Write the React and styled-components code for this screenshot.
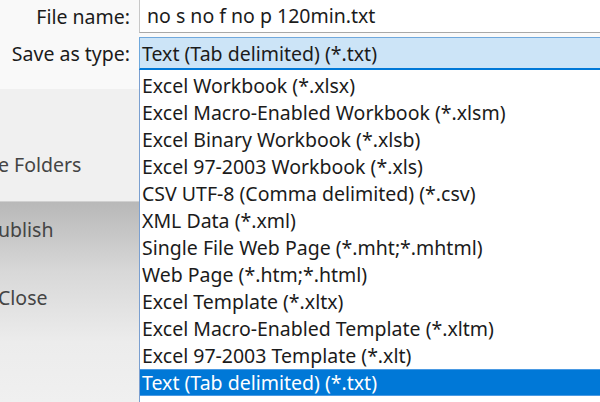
import React from 'react';
import styled, { createGlobalStyle } from 'styled-components';

const GlobalStyle = createGlobalStyle`
  html, body {
    margin: 0;
    padding: 0;
    width: 600px;
    height: 402px;
    overflow: hidden;
    background: #f0f0f0;
  }
  * { box-sizing: border-box; }
`;

const fileTypes = [
  'Excel Workbook (*.xlsx)',
  'Excel Macro-Enabled Workbook (*.xlsm)',
  'Excel Binary Workbook (*.xlsb)',
  'Excel 97-2003 Workbook (*.xls)',
  'CSV UTF-8 (Comma delimited) (*.csv)',
  'XML Data (*.xml)',
  'Single File Web Page (*.mht;*.mhtml)',
  'Web Page (*.htm;*.html)',
  'Excel Template (*.xltx)',
  'Excel Macro-Enabled Template (*.xltm)',
  'Excel 97-2003 Template (*.xlt)',
  'Text (Tab delimited) (*.txt)',
];

const App = () => {
  const selected = 'Text (Tab delimited) (*.txt)';

  return (
    <>
      <GlobalStyle />
      <Dialog>
        <FormArea>
          <FormRow>
            <Label>File name:</Label>
            <NameInput>no s no f no p 120min.txt</NameInput>
          </FormRow>
          <FormRow>
            <Label>Save as type:</Label>
            <TypeSelect>{selected}</TypeSelect>
          </FormRow>
        </FormArea>

        <Body>
          <SidePanel>
            <Spacer />
            <FolderSection>
              <SideText>e Folders</SideText>
            </FolderSection>
            <ActionSection>
              <SideText>ublish</SideText>
              <SideText>Close</SideText>
            </ActionSection>
          </SidePanel>

          <TypeList>
            {fileTypes.map((t) => (
              <TypeItem key={t} active={t === selected}>
                {t}
              </TypeItem>
            ))}
          </TypeList>
        </Body>
      </Dialog>
    </>
  );
};

export default App;

const Dialog = styled.div`
  width: 600px;
  height: 402px;
  display: flex;
  flex-direction: column;
  font-family: 'Noto Sans', 'Open Sans', sans-serif;
  font-size: 19.5px;
  color: #1b1b1b;
  background: #f9f9f9;
`;

const FormArea = styled.div`
  display: flex;
  flex-direction: column;
  gap: 4px;
`;

const FormRow = styled.div`
  display: flex;
  align-items: stretch;
  height: 33px;
`;

const Label = styled.div`
  width: 139px;
  flex-shrink: 0;
  padding-right: 9px;
  display: flex;
  align-items: center;
  justify-content: flex-end;
  white-space: nowrap;
  color: #1b1b1b;
`;

const NameInput = styled.div`
  flex: 1;
  margin-top: -2px;
  height: 35px;
  background: #fff;
  border-left: 1px solid #c8c8c8;
  border-bottom: 1px solid #a8a8a8;
  padding: 0 0 0 7px;
  display: flex;
  align-items: center;
  white-space: nowrap;
`;

const TypeSelect = styled.div`
  flex: 1;
  background: #cce4f7;
  border: 1px solid #6fa8dc;
  border-right: none;
  border-bottom: 2px solid #0078d7;
  padding-left: 2px;
  display: flex;
  align-items: center;
  white-space: nowrap;
`;

const Body = styled.div`
  flex: 1;
  display: flex;
  min-height: 0;
`;

const SidePanel = styled.div`
  width: 139px;
  flex-shrink: 0;
  display: flex;
  flex-direction: column;
`;

const Spacer = styled.div`
  height: 19px;
  background: #f9f9f9;
`;

const FolderSection = styled.div`
  height: 112px;
  background: #f0f0f0;
  display: flex;
  align-items: flex-start;
  padding-top: 63px;
`;

const ActionSection = styled.div`
  flex: 1;
  background: linear-gradient(to bottom, #b8b8b8 0%, #d8d8d8 35%, #ececec 70%, #f0f0f0 100%);
  border-top: 1px solid #d0d0d0;
  display: flex;
  flex-direction: column;
  gap: 42px;
  padding-top: 15px;
`;

const SideText = styled.div`
  color: #444;
  line-height: 26px;
  white-space: nowrap;
  margin-left: -2px;
`;

const TypeList = styled.div`
  flex: 1;
  background: #fff;
  border-left: 1px solid #7a9fd0;
  display: flex;
  flex-direction: column;
  padding-top: 2px;
`;

const TypeItem = styled.div`
  height: 27px;
  display: flex;
  align-items: center;
  padding-left: 2px;
  white-space: nowrap;
  background: ${(p) => (p.active ? '#0078d7' : 'transparent')};
  color: ${(p) => (p.active ? '#fff' : '#1b1b1b')};
  border-top: ${(p) => (p.active ? '1px solid #4a9ae3' : 'none')};
  border-bottom: ${(p) => (p.active ? '1px solid #4a9ae3' : 'none')};
`;
